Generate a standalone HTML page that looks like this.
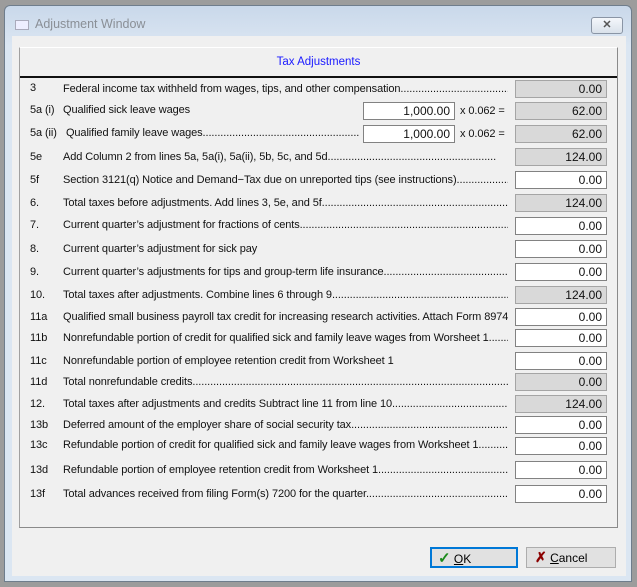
<html><head><style>
body{margin:0;width:637px;height:587px;background:#9c9c9c;position:relative;overflow:hidden;font-family:"Liberation Sans",sans-serif;}
.win{position:absolute;left:4px;top:5px;width:628px;height:577px;background:linear-gradient(#c9d8ea,#dbe6f2 40px);border:1px solid #6f7d8c;border-radius:6px 6px 0 0;box-sizing:border-box}
.title{position:absolute;left:35px;top:17px;font-size:12.5px;color:#8a8f96}
.ic{position:absolute;left:15px;top:20px;width:12px;height:8px;border:1px solid #aab;background:#eef}
.close{position:absolute;left:591px;top:17px;width:30px;height:15px;border:1px solid #8a95a5;border-radius:3px;background:linear-gradient(#f4f7fb,#d9e1ea);font-size:11px;text-align:center;line-height:15px;color:#555;font-weight:bold}
.cont{position:absolute;left:12px;top:36px;width:614px;height:540px;background:#f0f0f0}
.panel{position:absolute;left:19px;top:47px;width:599px;height:481px;border:1px solid #8a8a8a;border-top-color:#fff;border-left-color:#a0a0a0;box-sizing:border-box}
.hd{position:absolute;left:0;top:56px;width:637px;text-align:center;font-size:11.5px;color:#1a1aff;}
.hline{position:absolute;left:20px;top:76px;width:597px;height:2px;background:#111}
.r{position:absolute;font-size:11px;color:#111;white-space:nowrap;letter-spacing:-0.1px}
.n{left:30px}.d{left:63px;overflow:hidden;width:445px}
.b{position:absolute;left:515px;width:92px;height:18px;box-sizing:border-box;border:1px solid #828282;background:#fff;font-size:12px;text-align:right;padding-right:4px;line-height:16px;color:#111}
.g{background:#d9d9d9;border-color:#a5a5a5}
.btn{position:absolute;top:547px;height:21px;box-sizing:border-box;border:1px solid #adadad;background:#e1e1e1;font-size:12px;line-height:19px}
</style></head><body>
<div class="win"></div>
<div class="ic"></div><div class="title">Adjustment Window</div>
<div class="close">✕</div>
<div class="cont"></div>
<div class="panel"></div>
<div class="hd">Tax Adjustments</div>
<div class="hline"></div>

<div class="r n" style="top:82px">3</div><div class="r d" style="top:83px">Federal income tax withheld from wages, tips, and other compensation.......................................</div><div class="b g" style="top:80px">0.00</div>

<div class="r n" style="top:104px">5a (i)</div><div class="r d" style="top:104px">Qualified sick leave wages</div>
<div class="b" style="left:363px;top:102px">1,000.00</div><div class="r" style="left:460px;top:105px">x 0.062 =</div><div class="b g" style="top:102px">62.00</div>

<div class="r n" style="top:127px">5a (ii)</div><div class="r d" style="top:127px">&nbsp;Qualified family leave wages.....................................................</div>
<div class="b" style="left:363px;top:125px">1,000.00</div><div class="r" style="left:460px;top:128px">x 0.062 =</div><div class="b g" style="top:125px">62.00</div>

<div class="r n" style="top:151px">5e</div><div class="r d" style="top:151px">Add Column 2 from lines 5a, 5a(i), 5a(ii), 5b, 5c, and 5d.........................................................</div><div class="b g" style="top:148px">124.00</div>

<div class="r n" style="top:174px">5f</div><div class="r d" style="top:174px">Section 3121(q) Notice and Demand−Tax due on unreported tips (see instructions)..................</div><div class="b" style="top:171px">0.00</div>

<div class="r n" style="top:197px">6.</div><div class="r d" style="top:197px">Total taxes before adjustments. Add lines 3, 5e, and 5f...................................................................</div><div class="b g" style="top:194px">124.00</div>

<div class="r n" style="top:219px">7.</div><div class="r d" style="top:219px">Current quarter’s adjustment for fractions of cents...........................................................................................</div><div class="b" style="top:217px">0.00</div>

<div class="r n" style="top:243px">8.</div><div class="r d" style="top:243px">Current quarter’s adjustment for sick pay</div><div class="b" style="top:240px">0.00</div>

<div class="r n" style="top:266px">9.</div><div class="r d" style="top:266px">Current quarter’s adjustments for tips and group-term life insurance.......................................................</div><div class="b" style="top:263px">0.00</div>

<div class="r n" style="top:289px">10.</div><div class="r d" style="top:289px">Total taxes after adjustments. Combine lines 6 through 9...............................................................................</div><div class="b g" style="top:286px">124.00</div>

<div class="r n" style="top:311px">11a</div><div class="r d" style="top:311px">Qualified small business payroll tax credit for increasing research activities. Attach Form 8974......</div><div class="b" style="top:308px">0.00</div>

<div class="r n" style="top:332px">11b</div><div class="r d" style="top:332px">Nonrefundable portion of credit for qualified sick and family leave wages from Worsheet 1.........</div><div class="b" style="top:329px">0.00</div>

<div class="r n" style="top:355px">11c</div><div class="r d" style="top:355px">Nonrefundable portion of employee retention credit from Worksheet 1</div><div class="b" style="top:352px">0.00</div>

<div class="r n" style="top:376px">11d</div><div class="r d" style="top:376px">Total nonrefundable credits..............................................................................................................................</div><div class="b g" style="top:373px">0.00</div>

<div class="r n" style="top:398px">12.</div><div class="r d" style="top:398px">Total taxes after adjustments and credits Subtract line 11 from line 10...........................................................</div><div class="b g" style="top:395px">124.00</div>

<div class="r n" style="top:419px">13b</div><div class="r d" style="top:419px">Deferred amount of the employer share of social security tax....................................................................</div><div class="b" style="top:416px">0.00</div>

<div class="r n" style="top:439px">13c</div><div class="r d" style="top:439px">Refundable portion of credit for qualified sick and family leave wages from Worksheet 1..............</div><div class="b" style="top:437px">0.00</div>

<div class="r n" style="top:464px">13d</div><div class="r d" style="top:464px">Refundable portion of employee retention credit from Worksheet 1..........................................................</div><div class="b" style="top:461px">0.00</div>

<div class="r n" style="top:488px">13f</div><div class="r d" style="top:488px">Total advances received from filing Form(s) 7200 for the quarter...............................................................</div><div class="b" style="top:485px">0.00</div>

<div class="btn" style="left:430px;width:88px;border:2px solid #0078d7;padding-left:6px"><span style="color:#1a8a1a;font-weight:bold;font-size:15px">✓</span> <u>O</u>K</div>
<div class="btn" style="left:526px;width:90px;padding-left:8px"><span style="color:#8b0000;font-weight:bold;font-size:14px">✗</span> <u>C</u>ancel</div>
</body></html>
